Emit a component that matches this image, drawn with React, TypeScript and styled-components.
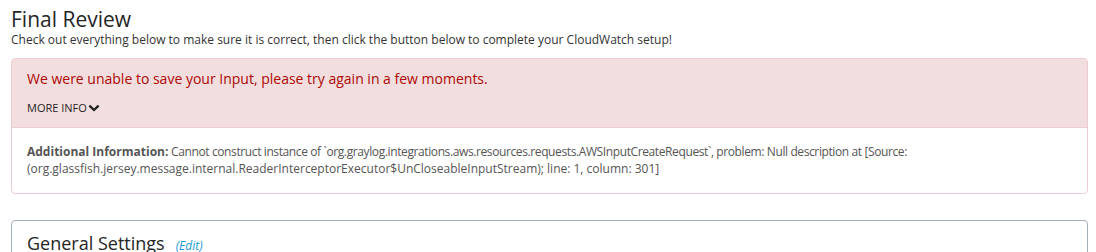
import React from "react";
import styled, { createGlobalStyle } from "styled-components";

const GlobalStyle = createGlobalStyle`
  html, body { margin: 0; padding: 0; background: #fff; }
  body { font-family: "Open Sans", "DejaVu Sans", sans-serif; color: #1f1f1f; }
`;

const Page = styled.div`
  padding: 7px 8px 0 11px;
`;

const Title = styled.h2`
  margin: 0;
  font-size: 21px;
  font-weight: 400;
  line-height: 24px;
  color: #252525;
`;

const Subtitle = styled.p`
  margin: 0;
  font-size: 12px;
  line-height: 17px;
  color: #333;
`;

const Panel = styled.section<{ $tone: "danger" | "default" }>`
  margin-top: ${(p) => (p.$tone === "danger" ? "10px" : "26px")};
  border: 1px solid ${(p) => (p.$tone === "danger" ? "#ebccd1" : "#a6afbd")};
  border-radius: 4px;
  background: #fff;
  overflow: hidden;
`;

const PanelHeading = styled.div`
  background: #f2dede;
  border-bottom: 1px solid #ebccd1;
  padding: 10px 15px 12px;
`;

const ErrorText = styled.p`
  margin: 0;
  font-size: 14px;
  line-height: 20px;
  color: #ad0707;
`;

const MoreInfo = styled.button`
  margin-top: 11px;
  display: flex;
  width: fit-content;
  align-items: center;
  gap: 1px;
  padding: 0;
  border: 0;
  background: none;
  font-family: inherit;
  font-size: 11px;
  line-height: 15px;
  text-transform: uppercase;
  color: #1f1f1f;
  cursor: pointer;
`;

const PanelBody = styled.div`
  padding: 15px 15px 16px;
  font-size: 12px;
  line-height: 17px;
  color: #555;
`;

const DetailLine = styled.span<{ $tight?: boolean }>`
  display: block;
  white-space: nowrap;
  letter-spacing: ${(p) => (p.$tight ? "-0.39px" : "0")};
`;

const Strong = styled.strong`
  font-weight: 700;
  letter-spacing: 0;
`;

const SectionTitle = styled.h3`
  margin: 0;
  padding: 11px 15px 13px;
  font-size: 18px;
  font-weight: 400;
  line-height: 22px;
  color: #252525;
`;

const EditLink = styled.a`
  margin-left: 11px;
  font-size: 12px;
  font-style: italic;
  color: #1a9ad9;
  text-decoration: none;
`;

const Chevron = () => (
  <svg width="12" height="8" viewBox="0 0 12 8" aria-hidden="true">
    <path d="M1.4 1.6 L6 6 L10.6 1.6" fill="none" stroke="#1f1f1f" strokeWidth="2.3" />
  </svg>
);

export default function App() {
  return (
    <>
      <GlobalStyle />
      <Page>
        <Title>Final Review</Title>
        <Subtitle>
          Check out everything below to make sure it is correct, then click the button below to complete your CloudWatch setup!
        </Subtitle>
        <Panel $tone="danger">
          <PanelHeading>
            <ErrorText>We were unable to save your Input, please try again in a few moments.</ErrorText>
            <MoreInfo type="button">
              More Info
              <Chevron />
            </MoreInfo>
          </PanelHeading>
          <PanelBody>
            <DetailLine $tight>
              <Strong>Additional Information:</Strong> Cannot construct instance of
              `org.graylog.integrations.aws.resources.requests.AWSInputCreateRequest`, problem: Null description at [Source:
            </DetailLine>
            <DetailLine>
              (org.glassfish.jersey.message.internal.ReaderInterceptorExecutor$UnCloseableInputStream); line: 1, column: 301]
            </DetailLine>
          </PanelBody>
        </Panel>
        <Panel $tone="default">
          <SectionTitle>
            General Settings
            <EditLink href="#">(Edit)</EditLink>
          </SectionTitle>
        </Panel>
      </Page>
    </>
  );
}
